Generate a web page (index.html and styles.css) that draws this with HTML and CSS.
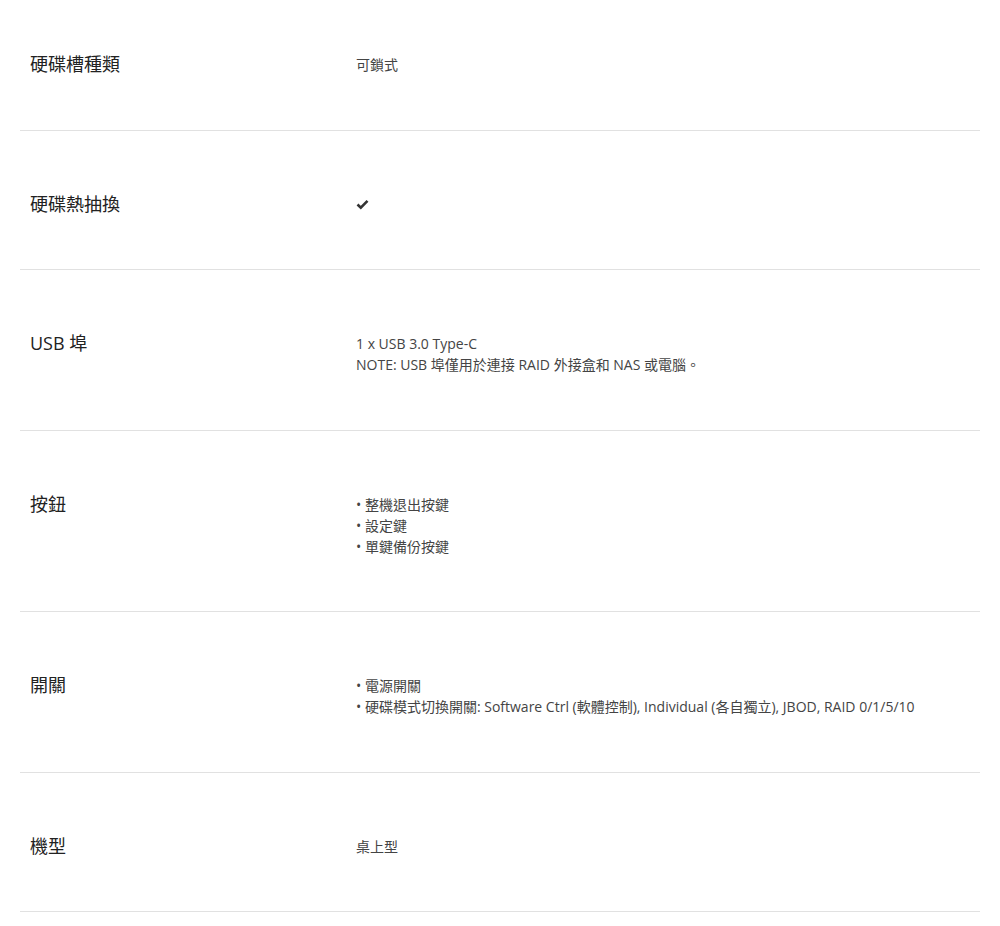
FILE: index.html
```html
<!DOCTYPE html>
<html lang="zh-Hant">
<head>
<meta charset="utf-8">
<title>規格</title>
<link rel="stylesheet" href="styles.css">
</head>
<body>
<div class="specs">
  <div class="row first">
    <div class="label">硬碟槽種類</div>
    <div class="value">可鎖式</div>
  </div>
  <div class="row">
    <div class="label">硬碟熱抽換</div>
    <div class="value"><svg class="check" width="13" height="11" viewBox="0 0 13 11"><path d="M1.5 5.5 L4.8 8.6 L11.5 1.8" fill="none" stroke="#333" stroke-width="2.6" stroke-linejoin="miter"/></svg></div>
  </div>
  <div class="row multi">
    <div class="label">USB 埠</div>
    <div class="value">
      <div>1 x USB 3.0 Type-C</div>
      <div>NOTE: USB 埠僅用於連接 RAID 外接盒和 NAS 或電腦。</div>
    </div>
  </div>
  <div class="row">
    <div class="label">按鈕</div>
    <div class="value">
      <div>• 整機退出按鍵</div>
      <div>• 設定鍵</div>
      <div>• 單鍵備份按鍵</div>
    </div>
  </div>
  <div class="row multi">
    <div class="label">開關</div>
    <div class="value">
      <div>• 電源開關</div>
      <div>• 硬碟模式切換開關: Software Ctrl (軟體控制), Individual (各自獨立), JBOD, RAID 0/1/5/10</div>
    </div>
  </div>
  <div class="row">
    <div class="label">機型</div>
    <div class="value">桌上型</div>
  </div>
</div>
</body>
</html>
```

FILE: styles.css
```css
html, body {
  margin: 0;
  padding: 0;
  background: #fff;
}
body {
  font-family: "Open Sans", "Noto Sans CJK TC", sans-serif;
  color: #333;
}
.specs {
  margin: 0 20px;
}
.row {
  display: grid;
  grid-template-columns: 326px 1fr;
  padding: 63px 10px 54px;
  border-bottom: 1px solid #e1e1e1;
  align-items: start;
}
.row.first {
  padding-top: 54px;
  padding-bottom: 55px;
}
.row.multi {
  padding-bottom: 55px;
}
.label {
  font-size: 18px;
  line-height: 21px;
  color: #222;
}
.value {
  font-size: 14px;
  line-height: 21px;
  color: #444;
}
.check {
  display: block;
  margin-top: 5px;
}
```
